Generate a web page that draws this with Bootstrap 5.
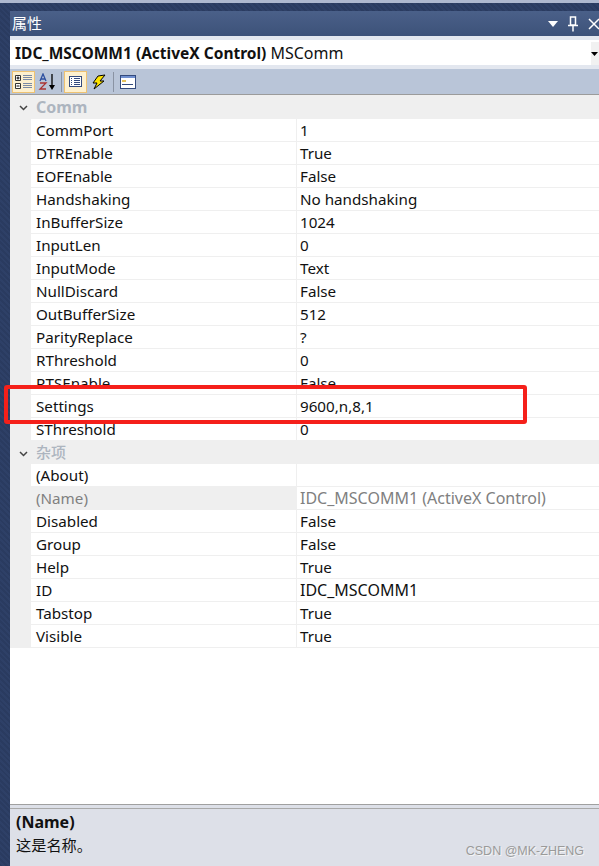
<!DOCTYPE html>
<html lang="zh">
<head>
<meta charset="utf-8">
<title>属性</title>
<link href="https://cdn.jsdelivr.net/npm/bootstrap@5.3.0/dist/css/bootstrap.min.css" rel="stylesheet">
<style>
html,body{height:866px;overflow:hidden}
body{font-family:"Noto Sans","Noto Sans CJK SC",sans-serif;font-size:15.2px;line-height:23px;color:#111;background:#2b3d63}
.top-strip{height:3px;background:#aeb8cf}
.dock{height:863px;padding-top:8px;padding-left:10px;background:repeating-linear-gradient(45deg,#2a3b60 0 2px,#2e4067 2px 4px)}
.panel{height:855px;background:#fff}
.title-bar{height:25px;color:#fff;padding:0 2px;background:linear-gradient(#4a6089,#3d5279);font-size:15px}
.title-ctl{gap:10px;margin-right:-3px}
.combo-wrap{height:33px;padding:4px 0;background:#e3e7ef}
.combo{height:25px;background:#fff;padding:2px 0 0 5px;font-size:15.5px}
.combo-type{font-size:16px}
.combo-btn{width:22px;background:#f1f1f1;margin-right:-14px;height:23px}
.tool-bar{height:26px;padding:2px;background:#b9c5d8;border-bottom:1px solid #9b9b9b}
.tool-btn{width:23px;height:22px}
.tool-on{background:#fdf0cf;border:1px solid #eec272}
.tool-sep{width:1px;height:20px;background:#8a93a3;margin:0 2px 0 3px}
.grp{height:23px;background:#efefef;color:#adb5bf;font-weight:700;font-size:16px}
.grp-first{height:24px}
.grp-cjk{font-weight:500;font-size:15px}
.grp-chev{width:26px}
.prow{height:23px;background:#fff;border-bottom:1px solid #efefef}
.pgut{width:21px;background:#efefef}
.pname{width:266px;padding-left:5px;border-right:1px solid #efefef}
.pval{padding-left:3px;white-space:nowrap;background:#fff}
.pcaps{font-size:16px}
.pdim{background:#efefef}
.pdim .pname,.pdim .pval{color:#808080}
.pfill{height:156px;background:#fff}
.desc-top{height:4px;background:#dde0e8;border-top:1px solid #a0a0a0}
.desc{background:#dde0e8;border-top:1px solid #a9a9a9;padding:2px 6px 0}
.desc-h{font-weight:700;font-size:16px}
.redbox{position:absolute;left:4px;top:385px;width:523px;height:39px;border:4px solid #f5201a;border-radius:3px}
.mark-wm{position:absolute;right:15px;top:842px;font-family:"Liberation Sans",sans-serif;font-size:12.5px;line-height:18px;color:#9a9a9a;text-shadow:1px 1px 0 #f4f4f4}
</style>
</head>
<body>
<div class="top-strip"></div>
<div class="dock">
<div class="panel d-flex flex-column">
  <div class="title-bar d-flex align-items-center justify-content-between">
    <span>属性</span>
    <span class="title-ctl d-flex align-items-center">
      <svg width="10" height="6" viewBox="0 0 10 6"><path d="M0 0h10L5 6z" fill="#fff"/></svg>
      <svg width="10" height="16" viewBox="0 0 10 16"><path d="M2.500 1h5v8h-5zM0 9.500h10M5 9v6.500" fill="none" stroke="#fff" stroke-width="1.500"/></svg>
      <svg width="12" height="12" viewBox="0 0 12 12"><path d="M1 1l10 10M11 1L1 11" stroke="#fff" stroke-width="1.500"/></svg>
    </span>
  </div>
  <div class="combo-wrap">
    <div class="combo d-flex align-items-center justify-content-between">
      <span><b>IDC_MSCOMM1 (ActiveX Control)</b> <span class="combo-type">MSComm</span></span>
      <span class="combo-btn d-flex align-items-center"><svg width="7" height="4" viewBox="0 0 7 4"><path d="M0 0h7L3.500 4z" fill="#000"/></svg></span>
    </div>
  </div>
  <div class="tool-bar d-flex align-items-center">
    <span class="tool-btn tool-on d-flex align-items-center justify-content-center">
      <svg width="19" height="17" viewBox="0 0 19 17"><path d="M1.500 2.500h5v5h-5zM1.500 10.500h5v5h-5z" fill="#fff" stroke="#333"/><path d="M2.500 5h3M4 3.500v3M2.500 13h3" stroke="#000"/><path d="M9 2.500h9M9 4.500h9M9 6.500h9M9 10.500h9M9 12.500h9M9 14.500h9" stroke="#7b8aa5"/></svg>
    </span>
    <span class="tool-btn d-flex align-items-center justify-content-center">
      <svg width="18" height="18" viewBox="0 0 18 18"><path d="M2 8l3-7 3 7M3 6h4" fill="none" stroke="#2c4fa0" stroke-width="1.300"/><path d="M2 10h6L2 16h6" fill="none" stroke="#a33" stroke-width="1.300"/><path d="M14 1v13" stroke="#000" stroke-width="1.300"/><path d="M11 12h6l-3 5z" fill="#000"/></svg>
    </span>
    <span class="tool-sep"></span>
    <span class="tool-btn tool-on d-flex align-items-center justify-content-center">
      <svg width="13" height="11" viewBox="0 0 13 11"><rect x=".5" y=".5" width="12" height="10" fill="#fff" stroke="#334a7d"/><path d="M2 2.500h1M2 4.500h1M2 6.500h1M2 8.500h1M5 2.500h6M5 4.500h6M5 6.500h6M5 8.500h6" stroke="#334a7d"/></svg>
    </span>
    <span class="tool-btn d-flex align-items-center justify-content-center">
      <svg width="14" height="16" viewBox="0 0 14 16"><path d="M13 1L6 2 1 9h4l-3 6 10-8H8z" fill="#ffe400" stroke="#000" stroke-width="1"/></svg>
    </span>
    <span class="tool-sep"></span>
    <span class="tool-btn d-flex align-items-center justify-content-center">
      <svg width="16" height="14" viewBox="0 0 16 14"><rect x=".5" y=".5" width="15" height="13" fill="#fff" stroke="#334a7d"/><path d="M1 1h14v2H1z" fill="#6f8fd0"/><path d="M2 5h4v2H2z" fill="#e6c15a"/><path d="M2 9.500h11" stroke="#334a7d"/></svg>
    </span>
  </div>
  <div class="grp grp-first d-flex align-items-center"><span class="grp-chev text-center"><svg width="9" height="6" viewBox="0 0 9 6"><path d="M1 1l3.500 3.500L8 1" fill="none" stroke="#444" stroke-width="1.500"/></svg></span>Comm</div>
  <div class="prow d-flex"><div class="pgut"></div><div class="pname">CommPort</div><div class="pval flex-grow-1">1</div></div>
  <div class="prow d-flex"><div class="pgut"></div><div class="pname">DTREnable</div><div class="pval flex-grow-1">True</div></div>
  <div class="prow d-flex"><div class="pgut"></div><div class="pname">EOFEnable</div><div class="pval flex-grow-1">False</div></div>
  <div class="prow d-flex"><div class="pgut"></div><div class="pname">Handshaking</div><div class="pval flex-grow-1">No handshaking</div></div>
  <div class="prow d-flex"><div class="pgut"></div><div class="pname">InBufferSize</div><div class="pval flex-grow-1">1024</div></div>
  <div class="prow d-flex"><div class="pgut"></div><div class="pname">InputLen</div><div class="pval flex-grow-1">0</div></div>
  <div class="prow d-flex"><div class="pgut"></div><div class="pname">InputMode</div><div class="pval flex-grow-1">Text</div></div>
  <div class="prow d-flex"><div class="pgut"></div><div class="pname">NullDiscard</div><div class="pval flex-grow-1">False</div></div>
  <div class="prow d-flex"><div class="pgut"></div><div class="pname">OutBufferSize</div><div class="pval flex-grow-1">512</div></div>
  <div class="prow d-flex"><div class="pgut"></div><div class="pname">ParityReplace</div><div class="pval flex-grow-1">?</div></div>
  <div class="prow d-flex"><div class="pgut"></div><div class="pname">RThreshold</div><div class="pval flex-grow-1">0</div></div>
  <div class="prow d-flex"><div class="pgut"></div><div class="pname">RTSEnable</div><div class="pval flex-grow-1">False</div></div>
  <div class="prow d-flex"><div class="pgut"></div><div class="pname">Settings</div><div class="pval flex-grow-1">9600,n,8,1</div></div>
  <div class="prow d-flex"><div class="pgut"></div><div class="pname">SThreshold</div><div class="pval flex-grow-1">0</div></div>
  <div class="grp grp-cjk d-flex align-items-center"><span class="grp-chev text-center"><svg width="9" height="6" viewBox="0 0 9 6"><path d="M1 1l3.500 3.500L8 1" fill="none" stroke="#444" stroke-width="1.500"/></svg></span>杂项</div>
  <div class="prow d-flex"><div class="pgut"></div><div class="pname">(About)</div><div class="pval flex-grow-1"></div></div>
  <div class="prow d-flex pdim"><div class="pgut"></div><div class="pname">(Name)</div><div class="pval pcaps flex-grow-1">IDC_MSCOMM1 (ActiveX Control)</div></div>
  <div class="prow d-flex"><div class="pgut"></div><div class="pname">Disabled</div><div class="pval flex-grow-1">False</div></div>
  <div class="prow d-flex"><div class="pgut"></div><div class="pname">Group</div><div class="pval flex-grow-1">False</div></div>
  <div class="prow d-flex"><div class="pgut"></div><div class="pname">Help</div><div class="pval flex-grow-1">True</div></div>
  <div class="prow d-flex"><div class="pgut"></div><div class="pname">ID</div><div class="pval pcaps flex-grow-1">IDC_MSCOMM1</div></div>
  <div class="prow d-flex"><div class="pgut"></div><div class="pname">Tabstop</div><div class="pval flex-grow-1">True</div></div>
  <div class="prow d-flex"><div class="pgut"></div><div class="pname">Visible</div><div class="pval flex-grow-1">True</div></div>
  <div class="pfill"></div>
  <div class="desc-top"></div>
  <div class="desc flex-grow-1">
    <div class="desc-h">(Name)</div>
    <div>这是名称。</div>
  </div>
</div>
</div>
<div class="redbox"></div>
<div class="mark-wm">CSDN @MK-ZHENG</div>
</body>
</html>
